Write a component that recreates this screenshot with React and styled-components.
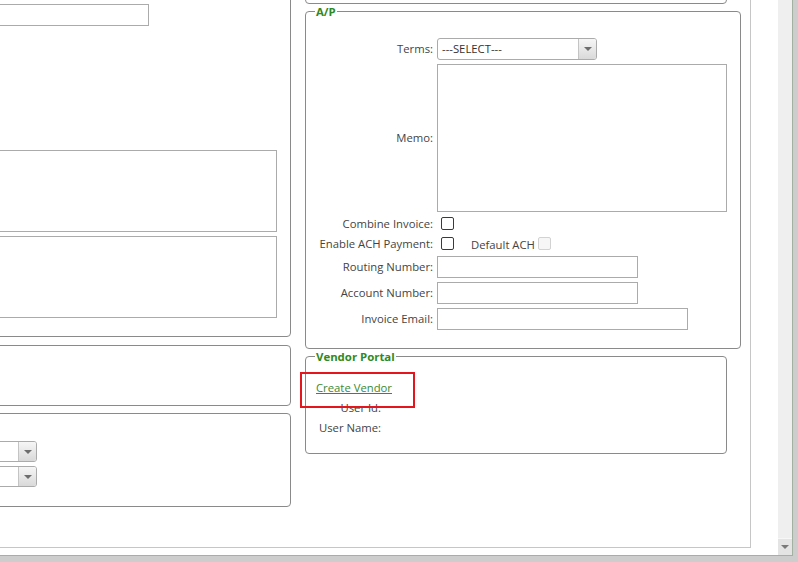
import React from "react";
import styled, { createGlobalStyle } from "styled-components";

const Global = createGlobalStyle`
  html, body { margin: 0; padding: 0; }
  body {
    background: #cdcdcd;
    font-family: "Open Sans", "Noto Sans", Arial, sans-serif;
    font-size: 11.3px;
    color: #444;
    overflow: hidden;
  }
`;

const Viewport = styled.div`
  display: flex;
  width: 792px;
  height: 555px;
  border-right: 1px solid #a3b1a3;
  border-bottom: 1px solid #a3b1a3;
  background: #fff;
`;

const Content = styled.div`
  flex: 1;
  background: #fff;
  overflow: hidden;
`;

const Scrollbar = styled.div`
  width: 14px;
  background: #efefef;
  display: flex;
  flex-direction: column;
  justify-content: flex-end;
`;

const ScrollButton = styled.div`
  height: 16px;
  background: #e4e4e4;
  border-top: 1px solid #f7f7f7;
  display: flex;
  align-items: center;
  justify-content: center;
`;

const Arrow = styled.span`
  width: 0;
  height: 0;
  border-left: 4px solid transparent;
  border-right: 4px solid transparent;
  border-top: 4px solid ${(p) => p.$color || "#707070"};
`;

const Page = styled.div`
  width: 750px;
  height: 547px;
  border-right: 1px solid #c6c6c6;
  border-bottom: 1px solid #c6c6c6;
  overflow: hidden;
`;

const Columns = styled.div`
  display: flex;
  align-items: flex-start;
  gap: 14px;
  margin-left: -160px;
`;

const Column = styled.div`
  display: flex;
  flex-direction: column;
  width: ${(p) => p.$w}px;
  flex: none;
`;

const Panel = styled.div`
  box-sizing: border-box;
  width: ${(p) => p.$w || "100%"};
  height: ${(p) => (p.$h ? `${p.$h}px` : "auto")};
  margin-top: ${(p) => p.$mt || 0}px;
  padding: ${(p) => p.$pad || "0"};
  border: 1px solid #8a8a8a;
  border-radius: 4px;
  display: flex;
  flex-direction: column;
  gap: 4px;
`;

const Spacer = styled.div`
  height: ${(p) => p.$h}px;
`;

const Fieldset = styled.fieldset`
  box-sizing: border-box;
  margin: 0;
  width: ${(p) => p.$w}px;
  min-width: 0;
  padding: ${(p) => p.$pad};
  border: 1px solid #8a8a8a;
  border-radius: 4px;
`;

const Legend = styled.legend`
  margin-left: 9px;
  padding: 0 1px;
  line-height: 15px;
  font-size: 11.4px;
  font-weight: 700;
  color: #2f8a24;
`;

const FormGrid = styled.div`
  display: grid;
  grid-template-columns: ${(p) => p.$label}px auto;
  column-gap: 4px;
  row-gap: ${(p) => p.$rowGap ?? 4}px;
  align-items: center;
  justify-items: start;
`;

const Label = styled.span`
  justify-self: end;
  white-space: nowrap;
  color: #444;
  line-height: ${(p) => p.$lh || 16}px;
`;

const Input = styled.div`
  box-sizing: border-box;
  width: ${(p) => p.$w}px;
  height: ${(p) => p.$h || 22}px;
  border: 1px solid #ababab;
  background: #fff;
`;

const SelectBox = styled.div`
  box-sizing: border-box;
  display: flex;
  width: ${(p) => p.$w}px;
  height: ${(p) => p.$h || 22}px;
  border: 1px solid #ababab;
  border-radius: 3px;
  background: #fff;
  overflow: hidden;
`;

const SelectText = styled.span`
  flex: 1;
  padding-left: 4px;
  line-height: ${(p) => (p.$h || 22) - 2}px;
  color: #333;
  white-space: nowrap;
`;

const SelectButton = styled.span`
  width: 17px;
  border-left: 1px solid #c4c4c4;
  background: linear-gradient(#f6f6f6, #d9d9d9);
  display: flex;
  align-items: center;
  justify-content: center;
`;

const CheckRow = styled.div`
  display: flex;
  align-items: center;
  height: 16px;
`;

const Check = styled.span`
  box-sizing: border-box;
  display: inline-block;
  width: 13px;
  height: 13px;
  margin-left: ${(p) => p.$ml || 0}px;
  margin-bottom: 2px;
  border: 1px solid ${(p) => (p.$disabled ? "#d2d2d2" : "#3a3a3a")};
  background: ${(p) => (p.$disabled ? "#f6f6f6" : "#fff")};
  border-radius: 2px;
`;

const InlineText = styled.span`
  margin-left: ${(p) => p.$ml || 0}px;
  margin-right: ${(p) => p.$mr || 0}px;
  color: #444;
  white-space: nowrap;
`;

const LinkRow = styled.div`
  grid-column: 1 / -1;
  justify-self: start;
  padding-left: 10px;
  height: 20px;
  display: flex;
  align-items: center;
`;

const LinkWrap = styled.span`
  position: relative;
  display: inline-block;
`;

const VendorLink = styled.a`
  color: #3b8a2f;
  text-decoration: underline;
  line-height: 16px;
  cursor: pointer;
`;

const Highlight = styled.span`
  position: absolute;
  left: -16px;
  top: -8px;
  width: 115px;
  height: 36px;
  box-sizing: border-box;
  border: 2px solid #e3161d;
  pointer-events: none;
`;

function Select({ w, h, text }) {
  return (
    <SelectBox $w={w} $h={h}>
      <SelectText $h={h}>{text}</SelectText>
      <SelectButton>
        <Arrow $color="#6d6d6d" />
      </SelectButton>
    </SelectBox>
  );
}

export default function App() {
  return (
    <>
      <Global />
      <Viewport>
        <Content>
          <Page>
            <Columns>
              <Column $w={451}>
                <Panel $mt={-40} $pad="43px 13px 18px 108px">
                  <Input $w={200} />
                  <Spacer $h={116} />
                  <Input $w={328} $h={82} />
                  <Input $w={328} $h={82} />
                </Panel>
                <Panel $mt={8} $h={61} />
                <Panel $mt={7} $pad="27px 13px 19px 108px">
                  <Select w={88} h={21} text="" />
                  <Select w={88} h={21} text="" />
                </Panel>
              </Column>
              <Column $w={436}>
                <Panel $w="422px" $h={30} $mt={-26} />
                <Fieldset $w={436} $pad="19px 0 18px 0">
                  <Legend>A/P</Legend>
                  <FormGrid $label={127}>
                    <Label>Terms:</Label>
                    <Select w={160} text="---SELECT---" />
                    <Label>Memo:</Label>
                    <Input $w={290} $h={148} />
                    <Label>Combine Invoice:</Label>
                    <CheckRow>
                      <Check $ml={4} />
                    </CheckRow>
                    <Label>Enable ACH Payment:</Label>
                    <CheckRow>
                      <Check $ml={4} />
                      <InlineText $ml={17} $mr={3}>
                        Default ACH
                      </InlineText>
                      <Check $disabled />
                    </CheckRow>
                    <Label>Routing Number:</Label>
                    <Input $w={201} />
                    <Label>Account Number:</Label>
                    <Input $w={201} />
                    <Label>Invoice Email:</Label>
                    <Input $w={251} />
                  </FormGrid>
                </Fieldset>
                <Fieldset $w={422} $pad="14px 0 15px 0">
                  <Legend>Vendor Portal</Legend>
                  <FormGrid $label={75} $rowGap={0}>
                    <LinkRow>
                      <LinkWrap>
                        <VendorLink>Create Vendor</VendorLink>
                        <Highlight />
                      </LinkWrap>
                    </LinkRow>
                    <Label $lh={20}>User Id:</Label>
                    <span />
                    <Label $lh={20}>User Name:</Label>
                    <span />
                  </FormGrid>
                </Fieldset>
              </Column>
            </Columns>
          </Page>
        </Content>
        <Scrollbar>
          <ScrollButton>
            <Arrow $color="#7a7a7a" />
          </ScrollButton>
        </Scrollbar>
      </Viewport>
    </>
  );
}
